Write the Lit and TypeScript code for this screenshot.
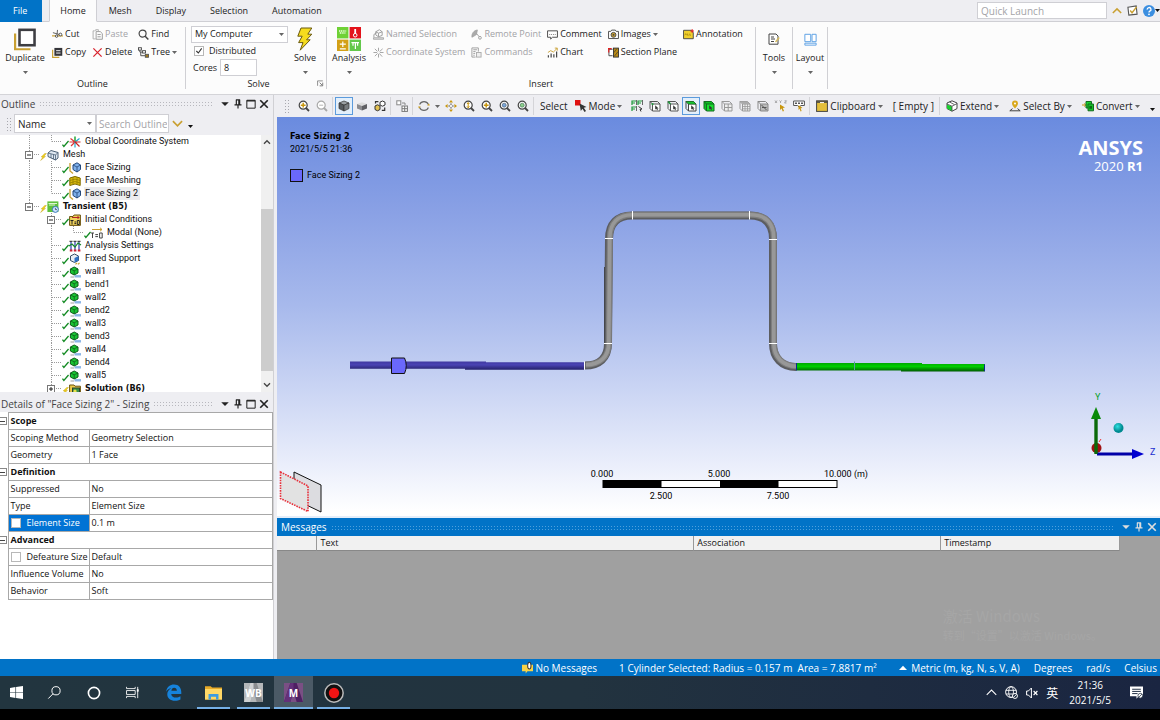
import { LitElement, html, svg, css, nothing, type TemplateResult, type SVGTemplateResult } from "lit";
import { customElement } from "lit/decorators.js";
import { classMap } from "lit/directives/class-map.js";

/* ---------- icons, all drawn on a 12 x 12 grid unless noted ---------- */

const cube = (fill: string, line: string, extra: SVGTemplateResult | typeof nothing = nothing) => svg`
  <path d="M3.5 4L1 1.5V8.5L3.5 11M1 1.5H8.5L11 4" fill="none" stroke=${line}/>
  <path d="M3.5 4H11V11H3.5Z" fill=${fill} stroke=${line}/>${extra}`;
const isoCube = (top: string, left: string, right: string, line: string) => svg`
  <path d="M6 1L11 3L6 5.2L1 3Z" fill=${top} stroke=${line} stroke-width=".7"/>
  <path d="M1 3L6 5.2V11L1 8.6Z" fill=${left} stroke=${line} stroke-width=".7"/>
  <path d="M11 3L6 5.2V11L11 8.6Z" fill=${right} stroke=${line} stroke-width=".7"/>`;
const lens = (stroke: string, inner: SVGTemplateResult | typeof nothing) => svg`
  <circle cx="5.2" cy="5.2" r="4" fill="#fff" stroke=${stroke} stroke-width="1.2"/>
  <path d="M8 8L11 11" stroke=${stroke} stroke-width="1.8"/>${inner}`;
const pointer = svg`<path d="M6.2 5.2V9.6L7.3 8.7L8.1 10.2L8.9 9.8L8.2 8.4H9.6Z" fill="#333"/>`;
const plus = svg`<path d="M2.8 5.2H7.6M5.2 2.8V7.6" stroke="#c8960c" stroke-width="1.5"/>`;

const ICONS: Record<string, SVGTemplateResult> = {
  duplicate: svg`<path d="M.6 3V11.6H9" fill="none" stroke="#c9a032" stroke-width="1.2"/><rect x="3" y="1" width="8.2" height="8.4" fill="#fff" stroke="#3d3d42" stroke-width="1.4"/>`,
  cut: svg`<path d="M0 7.5H12" stroke="#c9a032" stroke-width="1.3"/><path d="M1 4L8 6M6 1L5.5 6" stroke="#555"/><circle cx="5" cy="7.8" r="1.3" fill="#fff" stroke="#444"/><circle cx="9.2" cy="6" r="1.5" fill="#fff" stroke="#444"/>`,
  copy: svg`<path d="M.7 3V11.3H8" fill="none" stroke="#c9a032" stroke-width="1.3"/><rect x="2.6" y="1" width="8.6" height="8.6" fill="#35353a"/><path d="M4.5 4H9.3M4.5 6.6H9.3" stroke="#fff"/>`,
  paste: svg`<path d="M3 2H1.2V10.8H4M4 2V.8H7V2" fill="none" stroke="#aaa"/><path d="M4.5 2.8H9L11.3 5V11.2H4.5Z" fill="#fafafa" stroke="#999"/><path d="M6 6H9.5M6 8.5H9.5" stroke="#999"/>`,
  del: svg`<path d="M1.5 1.5L10.5 10.5M10.5 1.5L1.5 10.5" stroke="#d9232e" stroke-width="1.4"/>`,
  find: svg`<circle cx="5" cy="5" r="3.8" fill="none" stroke="#444" stroke-width="1.3"/><path d="M7.8 7.8L11.3 11.5" stroke="#444" stroke-width="1.6"/>`,
  tree: svg`<path d="M2 3V5.5H5M3 5.5V9.5H8" fill="none" stroke="#444"/><rect x=".5" y=".8" width="3.2" height="2.6" fill="#fff" stroke="#444"/><rect x="5" y="4" width="3.2" height="2.6" fill="#fff" stroke="#444"/><rect x="8" y="8" width="3.4" height="3.2" fill="#a67c1a" stroke="#555"/>`,
  bolt: svg`<path d="M4 .5H9.4L7.4 3.6H9.4L6.8 6.4H8.6L3.6 11.6L5 7.8H2.8L4.6 4.6H2.4Z" fill="#f5dc1e" stroke="#6b5a10" stroke-width=".5"/>`,
  analysis: svg`<rect width="5.7" height="5.7" fill="#6fd136"/><rect x="6.3" width="5.7" height="5.7" fill="#e3131b"/><rect y="6.3" width="5.7" height="5.7" fill="#d3a017"/><rect x="6.3" y="6.3" width="5.7" height="5.7" fill="#63c84b"/>
    <path d="M1 2H4.7M1.4 3H4.3" stroke="#eaffdd" stroke-width=".7" stroke-dasharray=".6 .3"/><path d="M9.1 1V3.4" stroke="#fff" stroke-width=".9"/><circle cx="9.1" cy="4.1" r=".9" fill="none" stroke="#fff" stroke-width=".5"/><path d="M1.4 8.6H4.4M2.9 7.2V10M1.4 10.9H4.4M7.2 7.8H11M8 7.8V9.4M9.2 7.8V11M10.3 7.8V9.4" stroke="#fff" stroke-width=".6"/>`,
  named: svg`<path d="M1 9V6L4 4M3 3L7 .8L10 3V7L6 8.5L3 6.5ZM3 3L6 4.6L10 3M6 4.6V8.5" fill="none" stroke="#999"/><path d="M.5 9.5H11.5V11.2H.5Z" fill="#ddd" stroke="#999" stroke-width=".8"/>`,
  coord: svg`<path d="M6 6V.8M6 6L10.5 2M6 6H11.5M6 6L10 10.5M6 6V11.5M6 6L2 10M6 6H.5M6 6L2 2" stroke="#a0a0a0"/><circle cx="6" cy="6" r="1.6" fill="#fafafa"/>`,
  remote: svg`<path d="M1 9C.5 5 3 1.5 7 1L6 6L3 8Z" fill="#aaa" stroke="#999" stroke-width=".7"/><path d="M6 5L9.5 9" stroke="#999"/><circle cx="9.8" cy="9.6" r="1.5" fill="#fff" stroke="#999"/>`,
  commands: svg`<path d="M1 1H8V5M1 1V11H5M2.5 3H6.5M2.5 5H5M2.5 7H4.5M2.5 9H4" fill="none" stroke="#999"/><rect x="6" y="6" width="5" height="5" fill="#eee" stroke="#aaa"/>`,
  comment: svg`<path d="M.6 2H11.4V9H6L4 11V9H.6Z" fill="#fff" stroke="#444"/><path d="M2.5 6H9.5" stroke="#777" stroke-dasharray="1 1"/>`,
  chart: svg`<path d="M1.5 11.5V9M4.5 11.5V7M7.5 11.5V8M10.5 11.5V5" stroke="#444" stroke-width="1.3"/><path d="M1 6L4 4L7 5.5L11 1.5M8.5 1.2H11.2V4" fill="none" stroke="#c9a032"/>`,
  images: svg`<path d="M.6 2.6H3L4 1.2H8L9 2.6H11.4V10.4H.6Z" fill="#fff" stroke="#444"/><circle cx="6" cy="6.4" r="2.7" fill="#c9a032" stroke="#444"/><circle cx="6" cy="6.4" r="1" fill="#444"/>`,
  section: svg`<path d="M5 2.5H1V9.5H5" fill="#fff" stroke="#444"/><rect x="6" y="1.2" width="5.4" height="9.8" fill="#b98a14" stroke="#333"/><path d="M7 10L11 5M6.5 6L9.5 2" stroke="#333" stroke-width=".7"/><path d="M.8 6V1.8M0 1.8H4" stroke="#e02020" stroke-width="1.3"/>`,
  annotation: svg`<path d="M.6 1.4H9L11.2 4V10.6H.6Z" fill="#f0cf2c" stroke="#444"/><path d="M2 6.8L3 5L4 6.8M5 5V6.8H6.2M7.4 5V6.8H8.6" fill="none" stroke="#8a6d00" stroke-width=".6"/><path d="M8 2.2H12M10 .2V4.2" stroke="#e02020" stroke-width="1.3"/>`,
  tools: svg`<path d="M1 1H8L10 3V11.2H1Z" fill="#fff" stroke="#444"/><path d="M3 4H6M3 6H7M3 8.5H6" stroke="#444"/><path d="M11.2 4.5L7.5 9" stroke="#d6bb5c" stroke-width="1.4"/>`,
  layout: svg`<path d="M.8 1.2H6.2V8H.8ZM7.4 1.2H11.2V8H7.4ZM.8 9.4H11.2V11.2H.8Z" fill="#fff" stroke="#5ea1e4" stroke-width=".9"/>`,
  launcher: svg`<path d="M1 10V1.5H10" fill="none" stroke="#666" stroke-width="1.2"/><path d="M4.5 4.5L9 9M9.8 4.5V10H4.5" fill="none" stroke="#666" stroke-width="1.4"/>`,
  zoomIn: svg`${lens("#444", plus)}`,
  zoomOut: svg`${lens("#a8a8a8", svg`<path d="M3.2 5.2H7.2" stroke="#b5b5b5"/>`)}`,
  zoomBox: svg`${lens("#444", svg`<path d="M5.2 2.6V7.8M4 4L5.2 2.6L6.4 4M4 6.4L5.2 7.8L6.4 6.4" fill="none" stroke="#c8960c"/>`)}`,
  zoomFit: svg`${lens("#444", plus)}`,
  zoomSel: svg`${lens("#444", svg`<circle cx="5.2" cy="5.2" r="2" fill="#7aa5d8" stroke="#456" stroke-width=".6"/>`)}`,
  zoomWorld: svg`${lens("#444", svg`<circle cx="5.2" cy="5.2" r="2" fill="#8ccf8c" stroke="#364" stroke-width=".6"/>`)}`,
  shaded: isoCube("#9aa0a4", "#555a5e", "#777c80", "#333"),
  flat: svg`<path d="M6 2.2L11 4L6 6L1 4Z" fill="#dcdcdc"/><path d="M1 4L6 6V10.6L1 8.4Z" fill="#8c8c90"/><path d="M11 4L6 6V10.6L11 8.4Z" fill="#606064"/>`,
  multi: svg`<path d="M1 6L3.5 4.8L6 6V9.5L3.5 10.8L1 9.5Z" fill="#e2c050" stroke="#333"/><path d="M6 2.2L8.5 1L11 2.2V5L8.5 6.2L6 5Z" fill="#fff" stroke="#333"/><path d="M1.5 3.6V1.6H4.4M10.7 7.4V10.4H7.8" fill="none" stroke="#333" stroke-width="1.2"/>`,
  toggle: svg`<rect x=".8" y=".8" width="4" height="4" fill="#fff" stroke="#888"/><path d="M6 3H9V5" fill="none" stroke="#888"/><rect x="6" y="6" width="5.4" height="5.4" fill="#fff" stroke="#777"/><path d="M8.7 6V11.4M6 8.7H11.4" stroke="#777"/>`,
  rotate: svg`<path d="M1.6 4.5A4.8 4.8 0 0 1 10.4 4.5M10.4 7.5A4.8 4.8 0 0 1 1.6 7.5" fill="none" stroke="#666" stroke-width="1.1"/><path d="M11.8 5.6H9.2L11 3.4ZM.2 6.4H2.8L1 8.6Z" fill="#c8960c"/>`,
  pan: svg`<path d="M6 0L8 2.6H4ZM6 12L4 9.4H8ZM0 6L2.6 4V8ZM12 6L9.4 8V4Z" fill="#c8960c"/><path d="M6 3.4V8.6M3.4 6H8.6" stroke="#555" stroke-dasharray="1.6 2"/>`,
  mode: svg`<rect width="5.5" height="5.5" fill="#e01010"/><path d="M4.5 3.5L11.5 7L8.8 7.8L11 11L9.6 12L7.4 8.8L5.8 11Z" fill="#333"/>`,
  filters: svg`<path d="M1 5V1H5M1 3H4M7 5V1H11M7 3H10M1 11V7H5M1 9H4" fill="none" stroke="#1d9a3a" stroke-width="1.2"/><path d="M5.5 0V5M11.5 0V5M5.5 6V11" stroke="#444" stroke-width=".8"/><path d="M7.5 6.5L11 9L9 9.4L10 11.5" fill="none" stroke="#333"/>`,
  vertex: cube("#fff", "#555", svg`${pointer}<rect x="2.6" y="3.2" width="1.8" height="1.8" fill="#1d9a3a"/>`),
  edge: cube("#fff", "#555", svg`${pointer}<path d="M1 1.5L3.5 4" stroke="#1d9a3a" stroke-width="1.5"/>`),
  face: svg`${cube("#fff", "#444", pointer)}<path d="M1 1.5H8.5L11 4H3.5Z" fill="#18c532" stroke="#156b20" stroke-width=".6"/>`,
  body: svg`<path d="M1 1.5H8.5L11 4H3.5V11L1 8.5Z" fill="#0ec022"/>${cube("#18e02e", "#156b20", pointer)}`,
  node: cube("#eee", "#999", svg`<path d="M3.5 7.5H11M7.2 4V11" stroke="#999"/>`),
  elemFace: cube("#eee", "#999", svg`<path d="M3.5 6.5H11M3.5 8.8H11M6 1.5V11M8.5 4V11" stroke="#999" stroke-width=".8"/><path d="M1 1.5H8.5L11 4H3.5Z" fill="#aaa"/>`),
  elem: cube("#bbb", "#888", svg`<path d="M4.5 5L9.5 10M5 7.5H9.5" stroke="#555"/>`),
  xyz: svg`<path d="M0 .5L2 3M2 .5L0 3M4.5 .5L5.5 1.7L6.5 .5M5.5 1.7V3M9.5 .8H11.5L9.5 3H11.5" fill="none" stroke="#888" stroke-width=".7"/><path d="M5 4.5L10 7.5L7.8 8L9 11L7.8 11.4L6.6 8.6L5 10Z" fill="#c8960c"/>`,
  info: svg`<path d="M.6 1H11.4V5.5H8L6 7L4.5 5.5H.6Z" fill="#fff" stroke="#555"/><path d="M2 3.2H10" stroke="#555" stroke-width="1.4" stroke-dasharray="2 1"/><path d="M5.5 5L9.5 8L7.6 8.2L8.6 11L7.6 11.4L6.6 8.8L5.5 10Z" fill="#c8960c"/>`,
  clipboard: svg`<rect x=".6" y=".8" width="10.8" height="10.6" fill="#e4bf3a" stroke="#444"/><path d="M.6 2H11.4" stroke="#444" stroke-width="1.6"/><path d="M4 2.6H8" stroke="#fff"/>`,
  extend: svg`<path d="M6 .8L11 3V8.6L6 11.2L1 8.6V3Z" fill="#fff" stroke="#444"/><path d="M1 4.4L6 6.4V11L1 8.6Z" fill="#18d02e"/><path d="M1 4L6 6.2L11 3.6M6 6.2V11.2M3.5 2L8.5 4.6" fill="none" stroke="#444" stroke-width=".8"/>`,
  selectBy: svg`<path d="M6 8.5C4 6 3 4.8 3 3.4A3 3 0 0 1 9 3.4C9 4.8 8 6 6 8.5Z" fill="#d9a91e"/><circle cx="6" cy="3.4" r="1" fill="#fff"/><path d="M3.5 8.6L.8 10.8H11.2L8.5 8.6" fill="none" stroke="#444"/>`,
  convert: svg`<path d="M0 5H3.5M2.2 3.5L3.8 5L2.2 6.5" fill="none" stroke="#c8960c"/><path d="M4 1.5H9.5V8H4Z" fill="#18d02e" stroke="#156b20"/><path d="M6 4H11.5V10.8H6Z" fill="#14c028" stroke="#156b20"/><rect x="7.4" y="6" width="2.6" height="2.8" fill="#0a6a15"/>`,
  chevUp: svg`<path d="M1 8.5L6 3.5L11 8.5" fill="none" stroke="#c9a032" stroke-width="1.8"/>`,
  chevDown: svg`<path d="M1 3.5L6 8.5L11 3.5" fill="none" stroke="#c9a032" stroke-width="1.8"/>`,
  todo: svg`<path d="M1 2.5L10 1L11 10L2 11Z" fill="#fff" stroke="#555" stroke-width="1.2"/><path d="M3.5 6L5.5 8.5L10.5 2" fill="none" stroke="#c9a032" stroke-width="1.5"/>`,
  help: svg`<circle cx="6" cy="6" r="6" fill="#3b8ee0"/><path d="M4.2 4.6A1.9 1.9 0 1 1 6.8 6.2Q6 6.6 6 7.4" fill="none" stroke="#fff" stroke-width="1.3"/><circle cx="6" cy="9.3" r=".9" fill="#fff"/>`,
  menu: svg`<path d="M1.5 4H10.5L6 8.5Z" fill="#222"/>`,
  pin: svg`<path d="M3.5 1H8.5M4 1V6.5M7 1V6.5M8 1V6.5M1.8 7H10.2M6 7V11.5" fill="none" stroke="#222" stroke-width="1.4"/>`,
  maximize: svg`<path d="M1 1.5H11V11H1Z" fill="none" stroke="#222" stroke-width="1.2"/><path d="M1 2.2H11" stroke="#222" stroke-width="1.6"/>`,
  close: svg`<path d="M1.5 1.5L10.5 10.5M10.5 1.5L1.5 10.5" stroke="#222" stroke-width="2"/>`,
  global: svg`<path d="M6 6V.5" stroke="#17a02c" stroke-width="1.4"/><path d="M6 6L1.5 2.5M6 6L2 10M6 6H.5" stroke="#d33" stroke-width="1.2"/><path d="M6 6L10.5 2.5M6 6V11.5" stroke="#22aacc" stroke-width="1.2"/><path d="M6 6L10.5 10.5M6 6H11.5" stroke="#c22" stroke-width="1.2"/>`,
  mesh: svg`<path d="M1 4L4 1.5L11 3.5V9L8.5 11L1 7.5Z" fill="#dfe8f2" stroke="#4a6076"/><path d="M1 4L8.5 6L11 3.5M8.5 6V11M4 5V9M6.5 5.5V10" fill="none" stroke="#4a6076" stroke-width=".8"/>`,
  sizing: svg`<path d="M1 1V9L4 11.5" fill="none" stroke="#c9a032" stroke-width="1.3"/><path d="M4 3L8 .8L11.5 3V7.5L8 10L4 7.5Z" fill="#7fb0ea" stroke="#23477a"/><path d="M4 3L8 5L11.5 3M8 5V10" fill="none" stroke="#23477a" stroke-width=".8"/>`,
  meshing: svg`<path d="M.8 3Q6 0 11.2 3V10.5Q6 7.5 .8 10.5Z" fill="#d8b90f" stroke="#7d6a00"/><path d="M.8 5.5Q6 2.8 11.2 5.5M.8 8Q6 5 11.2 8M4 2V9M8 2V9" fill="none" stroke="#8d7800" stroke-width=".7"/>`,
  transient: svg`<rect x=".4" y=".4" width="11" height="10.6" fill="#5fc13c"/><path d="M1.5 2.5H10M3 2.5V5M5 2.5V5M7 2.5V5" stroke="#dff5d2"/><circle cx="8.4" cy="8.4" r="3" fill="#cfe6ff" stroke="#3b78b8"/><path d="M8.4 6.8V8.6H10" fill="none" stroke="#234" stroke-width=".7"/>`,
  initial: svg`<path d="M.6 2.5H4L5 1H11.4V11.4H.6Z" fill="#f1d35c" stroke="#6b5310"/><path d="M3 3.5H10M8.5 2L10 3.5L8.5 5" fill="none" stroke="#a12" stroke-width=".9"/><path d="M1.5 6.5H4.5M3 6.5V10.5M5.4 8H7.2M5.4 9.6H7.2M8.3 6.5H10.3V10.5H8.3Z" fill="none" stroke="#222"/>`,
  modal: svg`<path d="M1 2.5H11M9 .8L11 2.5L9 4.2" fill="none" stroke="#c9a032"/><path d="M0 6H3M1.5 6V11M4.3 7.6H7M4.3 9.6H7M8.6 6H11.2V11H8.6Z" fill="none" stroke="#444"/>`,
  settings: svg`<path d="M1 2H11.5V9.5H1Z" fill="#fff"/><path d="M2 1V10M6 1V10M10 1V10" stroke="#2a3ba8" stroke-width="1.2"/><path d="M0 6L3 4L6 7L9 3L12 5" fill="none" stroke="#17862a" stroke-width="1.2"/><path d="M.5 1.4H11.5" stroke="#444" stroke-width="1.4" stroke-dasharray="3 1"/><path d="M.8 10.6H3.4M4.8 10.6H7.4M8.8 10.6H11.4" stroke="#cc2233" stroke-width="2"/>`,
  support: svg`<path d="M1.5 3L5.5 1L9.5 3V7.5L5.5 9.5L1.5 7.5Z" fill="#e9eef4" stroke="#3a4f66"/><path d="M5.5 5L9.5 3V7.5L5.5 9.5Z" fill="#2f71c4"/><path d="M6.5 11.4L8 9.9M9 11.4L10.5 9.9" stroke="#c9a032" stroke-width="1.3"/>`,
  load: svg`<path d="M1.4 3L5.2 1L9 3V7L5.2 9L1.4 7Z" fill="#18c532" stroke="#0f5d1a"/><path d="M1.4 3L5.2 4.8L9 3M5.2 4.8V9" fill="none" stroke="#0f5d1a" stroke-width=".8"/><path d="M1.5 11H5" stroke="#bbb" stroke-width="1.4"/><path d="M5.5 10.3H12" stroke="#8cb6e6" stroke-width="2.4"/>`,
  solution: svg`<path d="M.6 2H5L6 3.2H11.4V11.4H.6Z" fill="#ecca4a" stroke="#6b5310"/><rect x="3.5" y="5" width="7" height="5.6" fill="#3a8f46" stroke="#28422c"/><circle cx="6" cy="8" r="1.6" fill="#e6e04a"/>`,
  check: svg`<path d="M.8 7L3.2 10.2L11.2 .8" fill="none" stroke="#128a22" stroke-width="2.2"/>`,
  update: svg`<path d="M8 0L2 6H5L1 12L9.5 5H6.5L11 0Z" fill="#f4d51c" stroke="#b58d00" stroke-width=".6"/>`,
  msg: svg`<path d="M0 3H12V10H6L4 12.5V10H0Z" fill="#f7d348"/><ellipse cx="8" cy="4" rx="1.8" ry="3.6" fill="#fff" stroke="#333" stroke-width="1.1"/>`,
  upTri: svg`<path d="M0 9H12L6 2.5Z" fill="#fff"/>`,
  start: svg`<path d="M0 1.8L5 1V5.7H0ZM5.6 .9L12 0V5.7H5.6ZM0 6.3H5V11L0 10.2ZM5.6 6.3H12V12L5.6 11.1Z" fill="#fff"/>`,
  search: svg`<circle cx="7.4" cy="4.4" r="3.8" fill="none" stroke="#fff" stroke-width=".9"/><path d="M4.6 7.2L.3 11.6" stroke="#fff" stroke-width=".9"/>`,
  cortana: svg`<circle cx="6" cy="6" r="4.8" fill="none" stroke="#fff" stroke-width="1.4"/>`,
  taskview: svg`<path d="M.5 .8V2.4H8.5V.8M.5 11.2V9.6H8.5V11.2M.5 4.2H8.5V7.8H.5ZM10.8 .8V11.2" fill="none" stroke="#fff" stroke-width=".8"/><rect x="10" y="3" width="1.7" height="2.2" fill="#fff"/>`,
  edgeApp: svg`<path d="M.8 5.4C1.3 2 3.6 .3 6.4 .3C9.8 .3 11.5 2.8 11.5 5.7V7H4.4C4.6 8.8 6 9.6 7.7 9.6C9 9.6 10 9.2 10.9 8.6V11C9.8 11.6 8.6 11.9 7.1 11.9C3.8 11.9 1.6 10 1.6 7.3C1.6 5.3 2.8 3.8 4.5 3C3 3.1 1.6 4 .8 5.4ZM4.5 4.8H8.4C8.3 3.5 7.6 2.7 6.5 2.7C5.4 2.7 4.7 3.5 4.5 4.8Z" fill="#1683dc"/>`,
  folder: svg`<path d="M0 1.5H4L5 2.5H12V11H0Z" fill="#e6a928"/><path d="M0 3.5H12V11H0Z" fill="#ffd866"/><path d="M2.5 11V7H9.5V11H7.8V9H4.2V11Z" fill="#3d9be0"/>`,
  wb: svg`<rect width="12" height="12" fill="#b4b7b9"/><path d="M4 0H8L12 12H8L6 5L4 12H0Z" fill="#8a8d90"/><path d="M4 0H6V5L4 12H0Z" fill="#cfd2d3"/>`,
  mech: svg`<rect width="12" height="12" fill="#7a4f84"/><path d="M4 0H8L12 12H8L6 5L4 12H0Z" fill="#4f1f62"/><path d="M4 0H6V5L4 12H0Z" fill="#64307a"/>`,
  record: svg`<circle cx="6" cy="6" r="5.5" fill="#111" stroke="#bbb" stroke-width=".9"/><circle cx="6" cy="6" r="3.1" fill="#f01414"/>`,
  trayUp: svg`<path d="M.8 8.5L6 3.3L11.2 8.5" fill="none" stroke="#fff" stroke-width="1.1"/>`,
  globe: svg`<circle cx="5.6" cy="5.6" r="5" fill="none" stroke="#fff" stroke-width=".9"/><ellipse cx="5.6" cy="5.6" rx="2.2" ry="5" fill="none" stroke="#fff" stroke-width=".8"/><path d="M.8 4H10.4M.8 7.4H10.4" stroke="#fff" stroke-width=".8"/><circle cx="9.2" cy="9.2" r="2.3" fill="#1d2b40" stroke="#fff" stroke-width=".9"/><path d="M7.8 10.6L10.6 7.8" stroke="#fff" stroke-width=".8"/>`,
  mute: svg`<path d="M.6 4H2.4L5.4 1V11L2.4 8H.6Z" fill="none" stroke="#fff" stroke-width="1"/><path d="M7.6 4L11.4 8M11.4 4L7.6 8" stroke="#fff" stroke-width="1.1"/>`,
  notice: svg`<path d="M0 .5H12V9.5H8L6 11.8V9.5H0Z" fill="#fff"/><path d="M2 3H10M2 5H10M2 7H7" stroke="#1d2b40" stroke-width=".9"/><circle cx="9.5" cy="9" r="2.2" fill="#fff" stroke="#1d2b40" stroke-width=".7"/><path d="M8 10.5L11 7.5" stroke="#1d2b40" stroke-width=".7"/>`,
  scrollUp: svg`<path d="M1.5 8.5L6 4L10.5 8.5" fill="none" stroke="#444" stroke-width="2"/>`,
  scrollDown: svg`<path d="M1.5 3.5L6 8L10.5 3.5" fill="none" stroke="#444" stroke-width="2"/>`,
};

const icon = (name: string, size = 12): TemplateResult =>
  html`<svg class="ic" width=${size} height=${size} viewBox="0 0 12 12" aria-hidden="true">${ICONS[name]}</svg>`;
const caret = html`<svg class="ic" width="5" height="3" viewBox="0 0 5 3" aria-hidden="true"><path d="M0 0H5L2.5 3Z" fill="#666"/></svg>`;
const darkCaret = html`<svg class="ic" width="5" height="3" viewBox="0 0 5 3" aria-hidden="true"><path d="M0 0H5L2.5 3Z" fill="#111"/></svg>`;

/* ---------- data ---------- */

type Guide = "none" | "line" | "tee" | "end" | "minus" | "minusEnd" | "plus";
interface Node { g: Guide[]; state: string; icon: string; text: string; bold?: boolean; picked?: boolean; }

const child = (icon: string, text: string): Node => ({ g: ["none", "tee"], state: "check", icon, text });
const TREE: Node[] = [
  { g: ["line", "end"], state: "check", icon: "global", text: "Global Coordinate System" },
  { g: ["minus"], state: "update", icon: "mesh", text: "Mesh" },
  { g: ["line", "tee"], state: "check", icon: "sizing", text: "Face Sizing" },
  { g: ["line", "tee"], state: "check", icon: "meshing", text: "Face Meshing" },
  { g: ["line", "end"], state: "check", icon: "sizing", text: "Face Sizing 2", picked: true },
  { g: ["minusEnd"], state: "update", icon: "transient", text: "Transient (B5)", bold: true },
  { g: ["none", "minus"], state: "check", icon: "initial", text: "Initial Conditions" },
  { g: ["none", "line", "end"], state: "check", icon: "modal", text: "Modal (None)" },
  child("settings", "Analysis Settings"),
  child("support", "Fixed Support"),
  ...["wall1", "bend1", "wall2", "bend2", "wall3", "bend3", "wall4", "bend4", "wall5"].map((t) => child("load", t)),
  { g: ["none", "plus"], state: "update", icon: "solution", text: "Solution (B6)", bold: true },
];

interface Detail { head?: string; name?: string; value?: string; tick?: boolean; active?: boolean; }
const DETAILS: Detail[] = [
  { head: "Scope" },
  { name: "Scoping Method", value: "Geometry Selection" },
  { name: "Geometry", value: "1 Face" },
  { head: "Definition" },
  { name: "Suppressed", value: "No" },
  { name: "Type", value: "Element Size" },
  { name: "Element Size", value: "0.1 m", tick: true, active: true },
  { head: "Advanced" },
  { name: "Defeature Size", value: "Default", tick: true },
  { name: "Influence Volume", value: "No" },
  { name: "Behavior", value: "Soft" },
];

@customElement("app-root")
export class AppRoot extends LitElement {
  static styles = css`
    :host { display: flex; flex-direction: column; height: 100vh; overflow: hidden; background: #eeeef2; color: #222;
      font: 9px/12px "Open Sans", "Noto Sans CJK SC", sans-serif; }
    * { box-sizing: border-box; }
    .ic { display: block; flex: none; overflow: visible; }
    button, input, select { font: inherit; color: inherit; margin: 0; padding: 0; border: 0; background: none; border-radius: 0; }
    button { display: flex; align-items: center; white-space: nowrap; }
    input[type="checkbox"] { appearance: none; width: 10px; height: 10px; border: 1px solid #b8b8b8; background: #fff; flex: none; }

    .tabs { display: flex; flex: none; height: 22px; border-bottom: 1px solid #cfcfd4; }
    .tab { padding: 0 12px; height: 22px; border-bottom: 1px solid #cfcfd4; }
    .tab.file { background: #0173c7; color: #fff; border-color: #0173c7; margin-right: 7px; padding: 0 15px 0 13px; }
    .tab.on { background: #fcfcfc; border: 1px solid #cfcfd4; border-top: 0; border-bottom-color: #fcfcfc; padding: 0 10px; }
    .launch { display: flex; align-items: center; gap: 5px; margin-left: auto; }
    .launch input { width: 130px; height: 17px; border: 1px solid #cfcfd4; background: #fff; padding: 0 3px; font-size: 10px; }
    ::placeholder { color: #a4a4a8; opacity: 1; }

    .ribbon { display: flex; flex: none; height: 73px; padding: 3px 0; background: #fcfcfc; border-bottom: 1px solid #d4d4d8; }
    .group { display: flex; flex-direction: column; position: relative; }
    .group.g1 { width: 185px; } .group.g2 { width: 140px; padding-left: 5px; } .group.g3 { width: 428px; }
    .group.g4 { width: 36px; } .group.g5 { width: 34px; }
    .group .content { display: flex; height: 52px; }
    .group .name { text-align: center; line-height: 14px; }
    .rule { flex: none; width: 1px; height: 62px; margin-top: 2px; background: #d0d0d4; }
    .big { flex-direction: column; justify-content: flex-start; padding-top: 2px; line-height: 12px; }
    .big.wide { width: 50px; } .big.part { width: 44px; } .big.mid { width: 34px; } .big.fill { width: 100%; }
    .big .pic { display: flex; align-items: center; justify-content: center; height: 24px; margin-bottom: 1px; }
    .big > .ic { margin-top: 7px; }
    .cells { display: grid; grid-auto-flow: column; grid-template-rows: 18px 18px; column-gap: 6px; align-content: start; padding-left: 2px; }
    .cells button { gap: 2px; }
    .off { color: #a2a2a6; }
    .form { display: grid; grid-template-rows: 18px 16px 17px; width: 97px; }
    .form label { display: flex; align-items: center; }
    .form label.tick { gap: 5px; padding-left: 3px; }
    .form label.cores { gap: 3px; padding-left: 2px; }
    .form label.cores input { width: 37px; height: 17px; border: 1px solid #cfcfd4; background: #fff; padding: 0 3px; }
    .ticked { display: grid; place-items: center; }
    .ticked > * { grid-area: 1 / 1; } .ticked svg { pointer-events: none; }
    .drop { display: grid; align-items: center; }
    .drop > * { grid-area: 1 / 1; } .drop .ic { justify-self: end; margin-right: 4px; pointer-events: none; }
    .drop select { appearance: none; width: 100%; height: 17px; border: 1px solid #cfcfd4; background: #fff; padding: 0 3px; }
    .corner { position: absolute; right: 2px; bottom: 4px; }

    .work { display: flex; flex: 1; min-height: 0; }
    .side { display: flex; flex-direction: column; flex: none; width: 274px; margin-right: 3px; border-right: 1px solid #d0d0d4; }
    .bar { display: flex; align-items: center; gap: 4px; flex: none; height: 17px; padding: 0 4px 0 1px; font-size: 10px; color: #444; }
    .bar h2 { font: inherit; margin: 0; white-space: nowrap; }
    .bar .dots { flex: 1; height: 5px; margin-right: 2px;
      background: radial-gradient(#b8b8be 25%, transparent 35%) 0 0/3px 3px; }
    .bar .tools { display: flex; gap: 3px; }
    .filter { display: flex; align-items: center; flex: none; height: 23px; padding-left: 6px; font-size: 10px; }
    .grip { width: 5px; height: 14px; background: radial-gradient(#a8a8ae 25%, transparent 40%) 0 0/3px 3px; }
    .filter .drop { width: 82px; margin-left: 3px; }
    .filter select, .filter input { height: 19px; }
    .filter input { width: 73px; border: 1px solid #cfcfd4; background: #fff; padding: 0 1px 0 2px; }
    .filter .more { margin-left: 3px; } .filter .over { margin: 6px 0 0 5px; }
    .tree { display: flex; flex: none; height: 257px; overflow: hidden; background: #fff; font-family: Roboto, sans-serif; color: #111; }
    .tree ul { flex: 1; list-style: none; margin: 0; padding: 0 0 0 18px; }
    .tree li { display: flex; align-items: center; height: 13px; }
    .tree .guide { width: 22px; height: 13px; }
    .tree .state { width: 7px; height: 8px; align-self: flex-end; overflow: visible; }
    .tree .label { padding: 0 2px 0 1px; margin-left: 3px; line-height: 13px; white-space: nowrap; }
    .tree .picked { background: #ececee; }
    .tree .bold { font-weight: 700; font-family: "DejaVu Sans Condensed", sans-serif; }
    .scroll { display: flex; flex-direction: column; align-items: center; width: 12px; padding: 3px 0; background: #f0f0f0; }
    .scroll .track { flex: 1; display: flex; flex-direction: column; justify-content: flex-end; width: 100%; padding: 3px 0 10px; }
    .scroll .thumb { height: 73%; background: #cdcdcd; }
    .props { flex: 1; background: #fff; }
    .bar.second { margin-top: 3px; }
    table { border-collapse: collapse; width: 100%; table-layout: fixed; }
    .props th, .props td { height: 17px; padding: 0 2px; border: 1px solid #a8a8a8; text-align: left; font-weight: 400; white-space: nowrap; color: #111; line-height: 12px; }
    .props .gut { width: 8px; border-width: 0 1px 0 0; padding: 0; }
    .props .key { width: 81px; }
    .props th.head { font-weight: 700; }
    .props th.active { background: #0173d4; color: #fff; }
    .props label { display: flex; align-items: center; gap: 6px; }
    .box { display: block; width: 7px; height: 8px; border: 1px solid #888; border-left: 0; background: linear-gradient(#444, #444) 0 50%/5px 1px no-repeat #fff; }

    .main { display: flex; flex-direction: column; flex: 1; min-width: 0; }
    .toolbar { display: flex; align-items: center; flex: none; height: 22px; padding-left: 7px; font-size: 10px; white-space: nowrap; }
    .toolbar .grip { margin-right: 6px; }
    .cell { width: 18px; height: 18px; justify-content: center; }
    .cell.on { border: 1px solid #5b9bdc; background: #e3effb; }
    .toolbar .cut { width: 1px; height: 18px; background: #d4d4d8; margin: 0 2px 0 1px; }
    .narrow { width: 9px; height: 18px; justify-content: center; }
    .word { gap: 2px; }
    .selmode { display: flex; gap: 7px; padding: 0 6px 0 4px; }
    .actions { display: flex; flex: 1; align-items: center; padding-left: 4px; gap: 4px; }
    .set { display: flex; gap: 10px; align-items: center; }
    .set .over { margin-top: 6px; }

    .view { position: relative; flex: 1; min-height: 0; overflow: hidden; color: #000; font-family: Roboto, sans-serif;
      background: linear-gradient(#6a8bdf, #8aa1e5 24%, #a7b9ec 47%, #c3cff2 64%, #eaeefb 87%, #fff 99%); }
    .view svg.model { position: absolute; inset: 0; width: 100%; height: 100%; }
    .view svg text { font: 9px Roboto, sans-serif; }
    .legend { position: relative; padding: 13px 0 0 13px; line-height: 13px; }
    .legend b { display: block; font-family: "DejaVu Sans Condensed", sans-serif; }
    .legend .key { display: flex; align-items: center; gap: 4px; margin-top: 13px; }
    .swatch { width: 13px; height: 13px; background: #6a68fb; border: 1px solid #111; }
    .logo { position: absolute; right: 17px; top: 20px; color: #fff; text-align: right; font-family: "Open Sans", sans-serif; font-size: 13px; line-height: 14px; }
    .logo b { display: block; font-size: 20px; line-height: 22px; font-weight: 700; }
    .logo strong { font-weight: 700; }

    .messages { display: flex; flex-direction: column; flex: none; height: 143px; border-top: 2px solid #e4eefa; background: #a0a0a0; position: relative; }
    .bar.blue { background: #0173c7; color: #fff; height: 18px; padding: 0 3px 0 4px; }
    .bar.blue .dots { background-image: radial-gradient(#4fa0dc 25%, transparent 35%); }
    .bar.blue .tools { filter: invert(1); }
    .messages th { height: 15px; padding: 0 3px; text-align: left; font-weight: 400; background: #f1f1f1; border-right: 1px solid #999; border-bottom: 1px solid #888; color: #111; }
    .messages table { width: calc(100% - 40px); border-collapse: separate; border-spacing: 0; }
    .mark { position: absolute; right: 58px; bottom: 16px; color: #a6a6a6; font: 15px/22px "Noto Sans CJK SC", sans-serif; }
    .mark small { display: block; font-size: 11px; line-height: 16px; }

    .status { display: flex; align-items: center; justify-content: flex-end; flex: none; height: 17px; padding-right: 3px; background: #0173c7; color: #fff; font-size: 10px; white-space: pre; gap: 14px; }
    .status span { display: flex; align-items: center; gap: 2px; }
    .status .lead { gap: 22px; }
    .task { display: flex; align-items: stretch; flex: none; height: 33px; background: linear-gradient(90deg, #22353f, #22333f 50%, #1a2541); color: #fff; }
    .task button { width: 39px; justify-content: center; }
    .task button.first { width: 35px; padding-right: 2px; }
    .apps { display: flex; gap: 1px; margin-left: 2px; }
    .apps button { position: relative; }
    .apps .run::after { content: ""; position: absolute; left: 3px; right: 3px; bottom: 0; height: 2px; background: #76b0e6; }
    .apps .now { background: #4b5a66; } .apps .now::after { left: 0; right: 0; }
    .tag { display: grid; place-items: center; } .tag > * { grid-area: 1 / 1; }
    .tag b { font-size: 10px; position: relative; }
    .tray { display: flex; align-items: center; gap: 8px; margin-left: auto; padding-right: 17px; }
    .tray button { width: auto; }
    .tray .ime { font: 12px/16px "Noto Sans CJK SC", sans-serif; }
    .tray time { text-align: center; font-size: 10px; line-height: 15px; margin: 0 11px 0 3px; }
    .foot { flex: none; height: 11px; background: #000; }
  `;

  private item(name: string, text: string, off = false, menu = false) {
    return html`<button class=${classMap({ off })} ?disabled=${off}>${icon(name, 11)}<span>${text}</span>${menu ? caret : nothing}</button>`;
  }

  private big(name: string, text: string, size: number, kind: string) {
    return html`<button class="big ${kind}"><span class="pic">${icon(name, size)}</span><span>${text}</span>${caret}</button>`;
  }

  private cell(name: string, label: string, on = false) {
    return html`<button class=${classMap({ cell: true, on })} aria-label=${label}>${icon(name)}</button>`;
  }

  private word(name: string, text: string) {
    return html`<button class="word">${name ? icon(name) : nothing}<span>${text}</span>${name ? caret : nothing}</button>`;
  }

  private bar(title: string, kind: string) {
    return html`<header class="bar ${kind}"><h2>${title}</h2><span class="dots"></span>
      <span class="tools">
        ${["menu", "pin", ...(kind === "blue" ? [] : ["maximize"]), "close"].map((n) => html`<button aria-label=${n}>${icon(n, 10)}</button>`)}
      </span></header>`;
  }

  private guide(g: Guide) {
    const down = g === "line" || g === "tee" || g === "minus" || g === "plus";
    const branch = g !== "line" && g !== "none";
    const boxed = g === "minus" || g === "minusEnd" || g === "plus";
    return html`<svg class="guide" viewBox="0 0 22 13" aria-hidden="true">
      ${g === "none" ? nothing : svg`<path d=${down ? "M11.5 0V13" : "M11.5 0V6.5"} stroke="#9a9a9a" stroke-dasharray="1 1"/>`}
      ${branch ? svg`<path d="M12 6.5H22" stroke="#9a9a9a" stroke-dasharray="1 1"/>` : nothing}
      ${boxed ? svg`<rect x="7.5" y="3.5" width="7" height="7" fill="#fff" stroke="#777"/><path d="M9 7H13" stroke="#222"/>` : nothing}
      ${g === "plus" ? svg`<path d="M11 5V9" stroke="#222"/>` : nothing}
    </svg>`;
  }

  private ribbon() {
    return html`
      <nav class="tabs">
        <button class="tab file">File</button><button class="tab on">Home</button>
        ${["Mesh", "Display", "Selection", "Automation"].map((t) => html`<button class="tab">${t}</button>`)}
        <div class="launch">
          <input type="text" placeholder="Quick Launch" aria-label="Quick Launch">
          <button aria-label="Collapse">${icon("chevUp", 10)}</button>
          <button aria-label="Tasks">${icon("todo", 11)}</button>
          <button aria-label="Help">${icon("help")}${darkCaret}</button>
        </div>
      </nav>
      <section class="ribbon">
        <div class="group g1">
          <div class="content">
            ${this.big("duplicate", "Duplicate", 22, "wide")}
            <div class="cells">
              ${this.item("cut", "Cut")}${this.item("copy", "Copy")}
              ${this.item("paste", "Paste", true)}${this.item("del", "Delete")}
              ${this.item("find", "Find")}${this.item("tree", "Tree", false, true)}
            </div>
          </div>
          <div class="name">Outline</div>
        </div>
        <i class="rule"></i>
        <div class="group g2">
          <div class="content">
            <div class="form">
              <div class="drop"><select aria-label="Solve target"><option>My Computer</option></select>${caret}</div>
              <label class="tick"><span class="ticked"><input type="checkbox" checked><svg class="ic" width="8" height="8" viewBox="0 0 12 12"><path d="M2 6L5 9L10 2" fill="none" stroke="#333" stroke-width="1.6"/></svg></span>Distributed</label>
              <label class="cores">Cores <input type="text" value="8"></label>
            </div>
            ${this.big("bolt", "Solve", 24, "mid")}
          </div>
          <div class="name">Solve</div>
          <button class="corner" aria-label="Solve options">${icon("launcher", 7)}</button>
        </div>
        <i class="rule"></i>
        <div class="group g3">
          <div class="content">
            ${this.big("analysis", "Analysis", 24, "part")}
            <div class="cells">
              ${this.item("named", "Named Selection", true)}${this.item("coord", "Coordinate System", true)}
              ${this.item("remote", "Remote Point", true)}${this.item("commands", "Commands", true)}
              ${this.item("comment", "Comment")}${this.item("chart", "Chart")}
              ${this.item("images", "Images", false, true)}${this.item("section", "Section Plane")}
              ${this.item("annotation", "Annotation")}
            </div>
          </div>
          <div class="name">Insert</div>
        </div>
        <i class="rule"></i>
        <div class="group g4"><div class="content">${this.big("tools", "Tools", 12, "fill")}</div></div>
        <i class="rule"></i>
        <div class="group g5"><div class="content">${this.big("layout", "Layout", 13, "fill")}</div></div>
        <i class="rule"></i>
      </section>`;
  }

  private side() {
    return html`<aside class="side">
      ${this.bar("Outline", "first")}
      <div class="filter">
        <span class="grip"></span>
        <div class="drop"><select aria-label="Filter by"><option>Name</option></select>${caret}</div>
        <input type="text" placeholder="Search Outline" aria-label="Search Outline">
        <button class="more" aria-label="Expand">${icon("chevDown", 11)}</button>
        <button class="over" aria-label="More">${darkCaret}</button>
      </div>
      <div class="tree">
        <ul>${TREE.map((n) => html`<li>
          ${n.g.map((g) => this.guide(g))}
          <svg class="state" viewBox="0 0 12 12" aria-hidden="true">${ICONS[n.state]}</svg>
          ${icon(n.icon, 12)}
          <span class=${classMap({ label: true, bold: !!n.bold, picked: !!n.picked })}>${n.text}</span></li>`)}</ul>
        <div class="scroll">${icon("scrollUp", 8)}<span class="track"><span class="thumb"></span></span>${icon("scrollDown", 8)}</div>
      </div>
      ${this.bar('Details of "Face Sizing 2" - Sizing', "second")}
      <div class="props"><table>
        <colgroup><col class="gut"><col class="key"><col></colgroup>
        ${DETAILS.map((d) => d.head
          ? html`<tr><td class="gut"><span class="box"></span></td><th class="head" colspan="2">${d.head}</th></tr>`
          : html`<tr><td class="gut"></td><th class=${classMap({ active: !!d.active })}>
              ${d.tick ? html`<label><input type="checkbox">${d.name}</label>` : d.name}</th><td>${d.value}</td></tr>`)}
      </table></div>
    </aside>`;
  }

  private toolbar() {
    const cut = html`<i class="cut"></i>`;
    return html`<div class="toolbar">
      <span class="grip"></span>
      ${this.cell("zoomIn", "Zoom in")}${this.cell("zoomOut", "Zoom out")}${cut}
      ${this.cell("shaded", "Shaded", true)}${this.cell("flat", "Wireframe")}${this.cell("multi", "Views")}${cut}
      ${this.cell("toggle", "Toggle")}${cut}
      ${this.cell("rotate", "Rotate")}<button class="narrow" aria-label="Rotate options">${caret}</button>
      ${this.cell("pan", "Pan")}${this.cell("zoomBox", "Zoom")}${this.cell("zoomFit", "Box zoom")}${this.cell("zoomSel", "Zoom to selection")}${this.cell("zoomWorld", "Zoom to fit")}${cut}
      <span class="selmode"><span>Select</span>${this.word("mode", "Mode")}</span>
      ${this.cell("filters", "Filters")}${this.cell("vertex", "Vertex")}${this.cell("edge", "Edge")}${this.cell("face", "Face", true)}${this.cell("body", "Body")}
      ${this.cell("node", "Node")}${this.cell("elemFace", "Element face")}${this.cell("elem", "Element")}${this.cell("xyz", "Coordinates")}${this.cell("info", "Label")}${cut}
      <span class="actions">
        <span class="set">${this.word("clipboard", "Clipboard")}${this.word("", "[ Empty ]")}</span>${cut}
        <span class="set">${this.word("extend", "Extend")}${this.word("selectBy", "Select By")}${this.word("convert", "Convert")}
        <button class="over" aria-label="More">${darkCaret}</button></span>
      </span>
    </div>`;
  }

  private view() {
    const bends = "M585 365.5C599 365.5 608 358 608 343.5L609 239C609 224 617 215.5 632 215.5H750C765 215.5 773 224 773 239V343.5C773 358 782 367 796 367";
    return html`<section class="view">
      <svg class="model" viewBox="277 117 883 399" aria-hidden="true">
        <defs>
          <linearGradient id="blue" x2="0" y2="1"><stop stop-color="#4038a0"/><stop offset=".4" stop-color="#4a44b4"/><stop offset="1" stop-color="#242068"/></linearGradient>
          <linearGradient id="green" x2="0" y2="1"><stop stop-color="#00a800"/><stop offset=".4" stop-color="#00d000"/><stop offset="1" stop-color="#005a00"/></linearGradient>
          <radialGradient id="teal" cx=".4" cy=".35"><stop stop-color="#30e0e0"/><stop offset="1" stop-color="#008a90"/></radialGradient>
        </defs>
        <path d=${bends} fill="none" stroke="#5c5d60" stroke-width="8"/>
        <g transform="translate(.8 -.8)"><path d=${bends} fill="none" stroke="#7e7e7e" stroke-width="6"/><path d=${bends} fill="none" stroke="#989898" stroke-width="3.6"/></g>
        <path d="M604.5 267V344" stroke="#44464c" stroke-width="1"/>
        <path d="M584.5 361.5V369.5M604 343.5H612M605 238.5H613M632.5 211V219.5M749.5 211V219.5M769 239.5H777M769 343.5H777" stroke="#fff"/>
        <path d="M350 361.5H486V362.2H584V369.8H465V368.8H350Z" fill="url(#blue)"/>
        <path d="M391.5 358H404.5Q408 365.5 404.5 373.5H391.5Z" fill="#6a68fb" stroke="#111"/>
        <path d="M796 363H922V364H985V371.5H901V370.5H796Z" fill="url(#green)"/>
        <path d="M796.5 363V370.5M984.5 364.5V371" stroke="#0a2a90"/><path d="M854.5 361.5V370" stroke="#5a9aa0"/>
        <path d="M294 472L321 485V512L294 499Z" fill="#dcdce0" stroke="#111"/>
        <path d="M280.5 472L308 486V511.5L280.5 498.5Z" fill="#e2e2e2" stroke="#e8303a" stroke-width="1.6" stroke-dasharray="1.6 1"/>
        <rect x="603" y="480.5" width="234" height="7" fill="#fff" stroke="#000"/>
        <path d="M603 480H661.5V488H603ZM720 480H778.5V488H720Z"/>
        <g text-anchor="middle"><text x="602" y="477">0.000</text><text x="719" y="477">5.000</text><text x="661" y="499">2.500</text><text x="778" y="499">7.500</text></g>
        <text x="824" y="477">10.000 (m)</text>
        <circle cx="1096.5" cy="448" r="5" fill="#a01212"/>
        <path d="M1097 454H1134" stroke="#0000a8" stroke-width="3"/><path d="M1132 449L1144 454L1132 459Z" fill="#0000d0"/>
        <path d="M1096 454V417" stroke="#0a6a0a" stroke-width="3.4"/><path d="M1091 419L1096 407L1101 419Z" fill="#0a8a0a"/>
        <path d="M1099 442L1101 439" stroke="#e33"/>
        <circle cx="1118.5" cy="428" r="5" fill="url(#teal)"/>
        <text x="1095" y="400" fill="#0aa02a">Y</text><text x="1150" y="455" fill="#1c2fd0">Z</text>
      </svg>
      <div class="legend"><b>Face Sizing 2</b><span>2021/5/5 21:36</span><div class="key"><i class="swatch"></i>Face Sizing 2</div></div>
      <div class="logo"><b>ANSYS</b>2020 <strong>R1</strong></div>
    </section>`;
  }

  render() {
    return html`
      ${this.ribbon()}
      <div class="work">
        ${this.side()}
        <main class="main">
          ${this.toolbar()}
          ${this.view()}
          <section class="messages">
            ${this.bar("Messages", "blue")}
            <table>
              <colgroup><col style="width:4.8%"><col style="width:44.7%"><col style="width:29.3%"><col></colgroup>
              <tr><th></th><th>Text</th><th>Association</th><th>Timestamp</th></tr>
            </table>
            <div class="mark">激活 Windows<small>转到“设置”以激活 Windows。</small></div>
          </section>
        </main>
      </div>
      <footer class="status">
        <span class="lead"><span>${icon("msg", 11)}No Messages</span><span>1 Cylinder Selected: Radius = 0.157 m  Area = 7.8817 m²</span><span>${icon("upTri", 8)} Metric (m, kg, N, s, V, A)</span></span>
        <span>Degrees</span><span>rad/s</span><span>Celsius</span>
      </footer>
      <nav class="task">
        <button class="first" aria-label="Start">${icon("start", 13)}</button>
        <button aria-label="Search">${icon("search", 13)}</button>
        <button aria-label="Cortana">${icon("cortana", 14)}</button>
        <button aria-label="Task view">${icon("taskview", 13)}</button>
        <div class="apps">
          <button aria-label="Edge">${icon("edgeApp", 17)}</button>
          <button class="run" aria-label="Explorer">${icon("folder", 17)}</button>
          <button class="run"><span class="tag">${icon("wb", 19)}<b>WB</b></span></button>
          <button class="run now"><span class="tag">${icon("mech", 19)}<b>M</b></span></button>
          <button class="run" aria-label="Recorder">${icon("record", 20)}</button>
        </div>
        <div class="tray">
          <button aria-label="Hidden icons">${icon("trayUp", 11)}</button>
          <button aria-label="Network">${icon("globe", 13)}</button>
          <button aria-label="Volume">${icon("mute", 12)}</button>
          <span class="ime">英</span>
          <time>21:36<br>2021/5/5</time>
          <button aria-label="Notifications">${icon("notice", 13)}</button>
        </div>
      </nav>
      <div class="foot"></div>`;
  }
}
